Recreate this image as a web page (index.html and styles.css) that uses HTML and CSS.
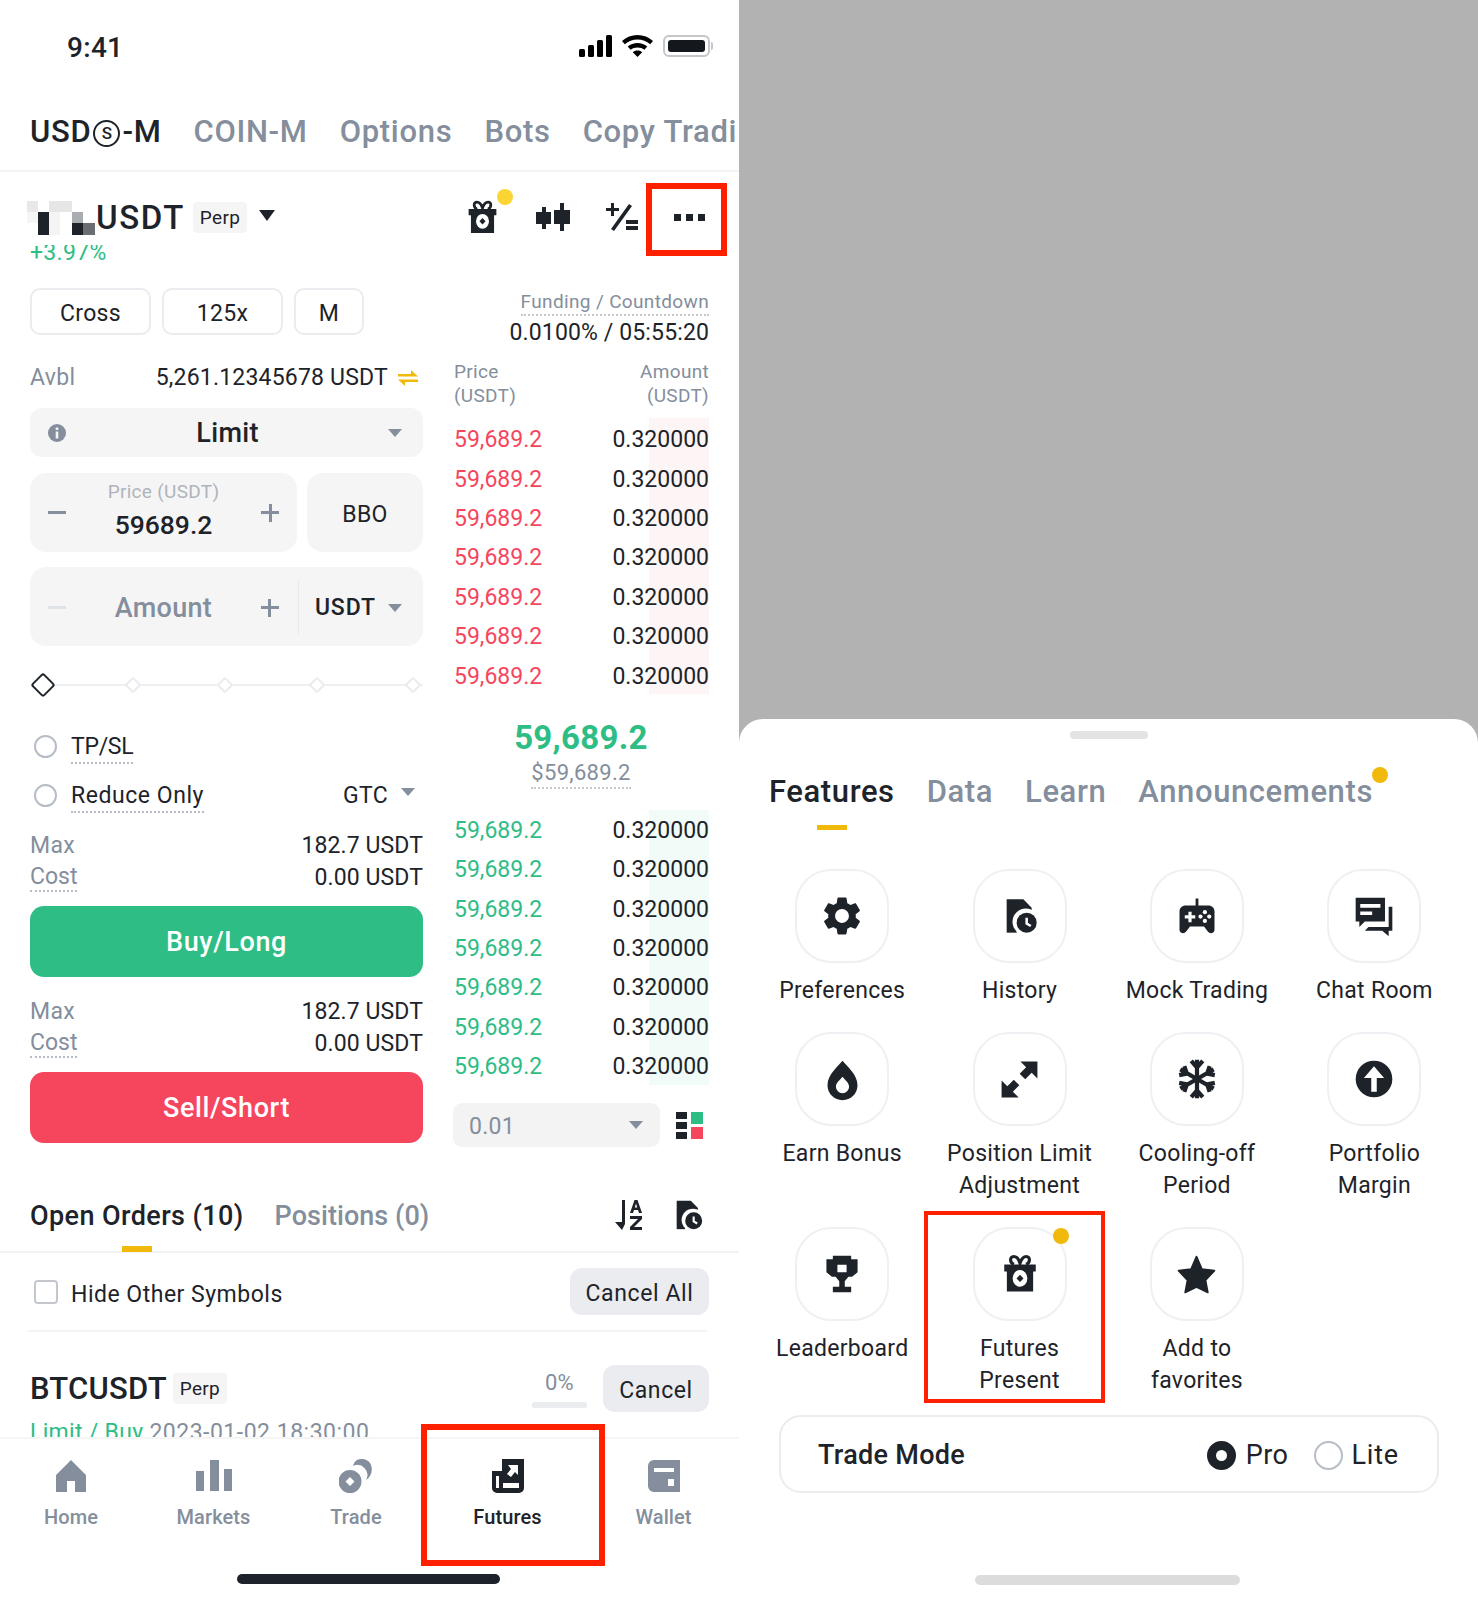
FILE: index.html
```html
<!DOCTYPE html>
<html lang="en">
<head>
    <meta charset="UTF-8">
    <title>Futures</title>
    <link rel="stylesheet" href="styles.css">
</head>
<body>
    <svg class="defs" width="0" height="0">
        <defs>
            <symbol id="i-gift" viewBox="0 0 24 24">
                <path d="M8.500 6.600C6 5.500 6 2 8.400 2c1.600 0 3 2 3.600 3.800C12.600 4 14 2 15.600 2 18 2 18 5.500 15.500 6.600" fill="none" stroke="currentColor" stroke-width="1.800"/>
                <path d="M3 6.500h18v4h-1.500V22h-15V10.500H3z" fill="currentColor"/>
                <ellipse cx="12" cy="14.500" rx="4.200" ry="4.800" fill="#fff"/>
                <path d="M12 12.400l2 2.100-2 2.100-2-2.100z" fill="currentColor"/>
            </symbol>
            <symbol id="i-hist" viewBox="0 0 24 24">
                <path d="M4 2h10l5 5v5H4z" fill="currentColor"/>
                <path d="M4 12h6v10H4z" fill="currentColor"/>
                <circle cx="15.500" cy="15.500" r="8" fill="#fff"/>
                <circle cx="16" cy="16" r="6" fill="currentColor"/>
                <path d="M16 13v3.500l2.500 1.500" fill="none" stroke="#fff" stroke-width="1.500"/>
            </symbol>
            <symbol id="i-gear" viewBox="0 0 24 24">
                <path fill="currentColor" d="M19.140 12.940c.04-.3.06-.61.06-.94 0-.32-.02-.64-.07-.94l2.030-1.580c.18-.14.23-.41.12-.61l-1.920-3.320c-.12-.22-.37-.29-.59-.22l-2.390.96c-.5-.38-1.030-.7-1.620-.94l-.36-2.540c-.04-.24-.24-.41-.48-.41h-3.840c-.24 0-.43.17-.47.41l-.36 2.540c-.59.24-1.130.57-1.620.94l-2.390-.96c-.22-.08-.47 0-.59.22L2.740 8.870c-.12.21-.08.47.12.61l2.030 1.580c-.05.3-.09.63-.09.94s.02.64.07.94l-2.030 1.580c-.18.14-.23.41-.12.61l1.920 3.320c.12.22.37.29.59.22l2.390-.96c.5.38 1.030.7 1.620.94l.36 2.540c.05.24.24.41.48.41h3.840c.24 0 .44-.17.47-.41l.36-2.540c.59-.24 1.130-.56 1.620-.94l2.390.96c.22.08.47 0 .59-.22l1.920-3.320c.12-.22.07-.47-.12-.61l-2.010-1.580zM12 15.600c-1.980 0-3.600-1.620-3.600-3.600s1.620-3.600 3.600-3.600 3.600 1.620 3.600 3.600-1.620 3.600-3.600 3.600z"/>
            </symbol>
            <symbol id="i-pad" viewBox="0 0 24 24">
                <path d="M11.200 2h1.600v4h5.700C20.500 6 22 7.400 22 9.500V20c0 1.700-2.500 2.500-3.700 1l-2.300-3H8l-2.300 3c-1.200 1.500-3.700.7-3.700-1V9.500C2 7.400 3.500 6 5.500 6h5.700z" fill="currentColor"/>
                <path d="M5 12.500h6M8 9.500v6" stroke="#fff" stroke-width="1.800"/>
                <circle cx="16.500" cy="9.800" r="1.200" fill="#fff"/><circle cx="16.500" cy="14.800" r="1.200" fill="#fff"/>
                <circle cx="14" cy="12.300" r="1.200" fill="#fff"/><circle cx="19" cy="12.300" r="1.200" fill="#fff"/>
            </symbol>
            <symbol id="i-chat" viewBox="0 0 24 24">
                <path d="M2 2h16v13H7l-3 3v-3H2z" fill="currentColor"/>
                <path d="M4.500 5.500h11v2h-11zM4.500 9.500h6.500v2h-6.500z" fill="#fff"/>
                <path d="M20 7h2v13h-2v3l-3.500-3H7l2-2h11z" fill="currentColor"/>
            </symbol>
            <symbol id="i-drop" viewBox="0 0 24 24">
                <path fill-rule="evenodd" fill="currentColor" d="M12 2c2.500 3 8 7.500 8 13a8 8 0 0 1-16 0C4 9.500 9.500 5 12 2zm0 8.500c-1.500 1.800-3.500 3.300-3.500 5.300a3.500 3.500 0 0 0 7 0c0-2-2-3.500-3.500-5.300z"/>
            </symbol>
            <symbol id="i-expand" viewBox="0 0 24 24">
                <path fill="currentColor" d="M12.500 2H22v9.500l-3.200-3.200-3.600 3.600-3.100-3.100 3.600-3.600zM2 22v-9.500l3.200 3.200 3.600-3.600 3.100 3.100-3.600 3.600 3.200 3.200z"/>
            </symbol>
            <symbol id="i-snow" viewBox="0 0 24 24">
                <g fill="none" stroke="currentColor" stroke-width="2.200">
                    <path d="M12 12V2M9 2.500l3 3.500 3-3.500"/>
                    <path d="M12 12v10M9 21.500l3-3.500 3 3.500"/>
                    <path d="M12 12L3.300 7M2.700 10l4-.8L5.400 5.300"/>
                    <path d="M12 12l8.700-5M21.300 10l-4-.8 1.300-3.900"/>
                    <path d="M12 12l-8.700 5M2.700 14l4 .8-1.300 3.900"/>
                    <path d="M12 12l8.700 5M21.300 14l-4 .8 1.300 3.900"/>
                </g>
            </symbol>
            <symbol id="i-up" viewBox="0 0 24 24">
                <circle cx="12" cy="12" r="10" fill="currentColor"/>
                <path d="M12 5l5.500 6.500H13.500V19h-3v-7.500H6.500z" fill="#fff"/>
            </symbol>
            <symbol id="i-cup" viewBox="0 0 24 24">
                <path fill-rule="evenodd" fill="currentColor" d="M7 2h10v2h3.500v7l-3 2.500H15.500L13.500 16v3H17v3H7v-3h3.500v-3l-2-2.500H6.500l-3-2.500V4H7zm2.500 5v4h5V7z"/>
            </symbol>
            <symbol id="i-star" viewBox="0 0 24 24">
                <path fill="currentColor" d="M12 2l3 7 7 .9-5 5.300 1.300 6.800-6.300-3-6.300 3L7 15.200 2 9.900 9 9z" stroke="currentColor" stroke-width="1" stroke-linejoin="round"/>
            </symbol>
        </defs>
    </svg>

    <div class="screen">
        <!-- left phone -->
        <div class="phone">
            <div class="status">
                <span class="clock">9:41</span>
                <div class="status-icons">
                    <svg width="33" height="22" viewBox="0 0 33 22"><rect x="0" y="14" width="6" height="8" rx="1.500"/><rect x="9" y="10" width="6" height="12" rx="1.500"/><rect x="18" y="5" width="6" height="17" rx="1.500"/><rect x="27" y="0" width="6" height="22" rx="1.500"/></svg>
                    <svg width="31" height="22" viewBox="0 0 31 22"><path d="M15.500 0C9.500 0 4.300 2.300 0 6l2.800 3.300C6.300 6.300 10.700 4.500 15.500 4.500s9.200 1.800 12.700 4.800L31 6C26.700 2.300 21.500 0 15.500 0z"/><path d="M15.500 8c-3.700 0-7 1.300-9.800 3.500l2.900 3.300c2-1.500 4.300-2.300 6.900-2.300s4.900.8 6.900 2.300l2.900-3.300C22.500 9.300 19.200 8 15.500 8z"/><path d="M15.500 15.500c-1.900 0-3.500.6-4.700 1.700l4.700 4.800 4.700-4.800c-1.200-1.100-2.800-1.700-4.700-1.700z"/></svg>
                    <div class="battery"><span></span></div>
                </div>
            </div>

            <div class="top-tabs">
                <div class="top-tabs-in">
                    <span class="on">USD<i class="coin">S</i>-M</span>
                    <span>COIN-M</span>
                    <span>Options</span>
                    <span>Bots</span>
                    <span>Copy Trading</span>
                </div>
            </div>

            <div class="symbol-row">
                <svg class="pixels" width="68" height="34" viewBox="0 0 68 34">
                    <rect x="0" y="0" width="11" height="11" fill="#e8e8e8"/><rect x="0" y="11" width="11" height="11" fill="#f5f5f5"/>
                    <rect x="22" y="0" width="23" height="11" fill="#e6e6e6"/><rect x="22" y="11" width="11" height="23" fill="#f4f4f4"/>
                    <rect x="11" y="11" width="11" height="23" fill="#1e2329"/>
                    <rect x="45" y="11" width="11" height="11" fill="#a9acb0"/><rect x="45" y="22" width="11" height="12" fill="#1e2329"/>
                    <rect x="56" y="22" width="12" height="12" fill="#6a6e73"/>
                </svg>
                <span class="sym">USDT</span>
                <span class="perp">Perp</span>
                <span class="caret caret-dark"></span>
                <div class="sym-icons">
                    <div class="gift-wrap">
                        <svg class="ic" width="37" height="37"><use href="#i-gift"/></svg>
                        <span class="dot dot-light"></span>
                    </div>
                    <svg class="ic" width="34" height="28" viewBox="0 0 34 28"><path d="M6 4h4v5h5v12h-5v5H6v-5H0V9h6zM24 0h4v7h6v14h-6v7h-4v-7h-6V7h6z" fill="currentColor"/></svg>
                    <svg class="ic" width="32" height="28" viewBox="0 0 32 28"><path d="M0 5h5V0h3v5h5v3H8v5H5V8H0zM23 1l3 2L8 28l-3-2zM20 17h12v4H20zM20 23h12v4H20z" fill="currentColor"/></svg>
                    <div class="more"><i></i><i></i><i></i></div>
                </div>
            </div>
            <div class="change"><span>+3.97%</span></div>

            <div class="trade">
                <div class="form">
                    <div class="lev-row">
                        <span class="lev w-wide">Cross</span>
                        <span class="lev w-wide">125x</span>
                        <span class="lev w-small">M</span>
                    </div>
                    <div class="avbl">
                        <span class="muted">Avbl</span>
                        <span class="avbl-val">5,261.12345678 USDT
                            <svg class="swap" width="20" height="16" viewBox="0 0 20 16"><path d="M0 4h13V0l7 6.500H0zM20 9.500H0l7 6.500v-4h13z" fill="#f0b90b"/></svg>
                        </span>
                    </div>
                    <div class="box limit">
                        <svg width="20" height="20" viewBox="0 0 20 20"><circle cx="10" cy="10" r="9" fill="#848e9c"/><rect x="8.700" y="8.500" width="2.600" height="7" fill="#f5f5f5"/><rect x="8.700" y="4.500" width="2.600" height="2.500" fill="#f5f5f5"/></svg>
                        <span class="limit-txt">Limit</span>
                        <span class="caret"></span>
                    </div>
                    <div class="price-row">
                        <div class="box stepper">
                            <span class="minus"></span>
                            <div class="step-mid">
                                <span class="step-label">Price (USDT)</span>
                                <span class="step-val">59689.2</span>
                            </div>
                            <span class="plus"></span>
                        </div>
                        <div class="box bbo">BBO</div>
                    </div>
                    <div class="box amount">
                        <span class="minus minus-off"></span>
                        <span class="amount-txt">Amount</span>
                        <span class="plus"></span>
                        <span class="sep"></span>
                        <span class="unit">USDT</span>
                        <span class="caret"></span>
                    </div>
                    <div class="slider">
                        <i class="knob"></i><i class="tick tick-first"></i><i class="tick"></i><i class="tick"></i><i class="tick tick-last"></i>
                    </div>
                    <div class="opt opt-first">
                        <span class="radio"></span><span class="dotted">TP/SL</span>
                    </div>
                    <div class="opt">
                        <span class="radio"></span><span class="dotted">Reduce Only</span>
                        <span class="gtc">GTC</span><span class="caret"></span>
                    </div>
                    <div class="kv"><span class="muted">Max</span><span class="num">182.7 USDT</span></div>
                    <div class="kv"><span class="muted dotted-soft">Cost</span><span class="num">0.00 USDT</span></div>
                    <div class="action buy">Buy/Long</div>
                    <div class="kv kv-top"><span class="muted">Max</span><span class="num">182.7 USDT</span></div>
                    <div class="kv"><span class="muted dotted-soft">Cost</span><span class="num">0.00 USDT</span></div>
                    <div class="action sell">Sell/Short</div>
                </div>

                <div class="book">
                    <div class="funding">
                        <span class="fund-label">Funding / Countdown</span>
                        <span class="fund-val">0.0100% / 05:55:20</span>
                    </div>
                    <div class="book-head">
                        <span>Price<br>(USDT)</span>
                        <span class="right">Amount<br>(USDT)</span>
                    </div>
                    <div class="rows rows-ask">
                        <div class="row"><span>59,689.2</span><span>0.320000</span></div>
                        <div class="row"><span>59,689.2</span><span>0.320000</span></div>
                        <div class="row"><span>59,689.2</span><span>0.320000</span></div>
                        <div class="row"><span>59,689.2</span><span>0.320000</span></div>
                        <div class="row"><span>59,689.2</span><span>0.320000</span></div>
                        <div class="row"><span>59,689.2</span><span>0.320000</span></div>
                        <div class="row"><span>59,689.2</span><span>0.320000</span></div>
                    </div>
                    <div class="mid">
                        <span class="mid-price">59,689.2</span>
                        <span class="mid-usd">$59,689.2</span>
                    </div>
                    <div class="rows rows-bid">
                        <div class="row"><span>59,689.2</span><span>0.320000</span></div>
                        <div class="row"><span>59,689.2</span><span>0.320000</span></div>
                        <div class="row"><span>59,689.2</span><span>0.320000</span></div>
                        <div class="row"><span>59,689.2</span><span>0.320000</span></div>
                        <div class="row"><span>59,689.2</span><span>0.320000</span></div>
                        <div class="row"><span>59,689.2</span><span>0.320000</span></div>
                        <div class="row"><span>59,689.2</span><span>0.320000</span></div>
                    </div>
                    <div class="book-foot">
                        <div class="step-select"><span>0.01</span><span class="caret"></span></div>
                        <svg width="27" height="27" viewBox="0 0 27 27"><rect x="0" y="0" width="11" height="7" fill="#1e2329"/><rect x="0" y="10" width="11" height="7" fill="#1e2329"/><rect x="0" y="20" width="11" height="7" fill="#1e2329"/><rect x="15" y="0" width="12" height="12" fill="#2ebd85"/><rect x="15" y="15" width="12" height="12" fill="#f6465d"/></svg>
                    </div>
                </div>
            </div>

            <div class="order-tabs">
                <span class="on">Open Orders (10)</span>
                <span>Positions (0)</span>
                <div class="order-icons">
                    <svg class="ic" width="28" height="30" viewBox="0 0 28 30"><path d="M7 0h3v24l-3 6-7-8h7z" fill="currentColor"/><path d="M15 13l4.500-13h3L27 13h-3l-1-3h-4l-1 3zM19.800 7.500h2.400L21 3.500zM15 16h12v3l-8 8h8v3H15v-3l8-8h-8z" fill="currentColor"/></svg>
                    <svg class="ic" width="34" height="34"><use href="#i-hist"/></svg>
                </div>
            </div>
            <div class="hide-row">
                <span class="check"></span>
                <span class="hide-txt">Hide Other Symbols</span>
                <span class="btn-grey cancel-all">Cancel All</span>
            </div>
            <div class="order">
                <div class="order-head">
                    <span class="order-sym">BTCUSDT</span>
                    <span class="perp">Perp</span>
                    <div class="fill">
                        <span>0%</span>
                        <i></i>
                    </div>
                    <span class="btn-grey cancel">Cancel</span>
                </div>
                <div class="order-sub"><span class="green">Limit / Buy</span> <span class="muted order-time">2023-01-02 18:30:00</span></div>
            </div>

            <div class="nav">
                <div class="nav-item">
                    <svg width="34" height="32" viewBox="0 0 34 32"><path d="M17 0l15 15v17H21V21h-8v11H2V15z" fill="currentColor"/></svg>
                    <span>Home</span>
                </div>
                <div class="nav-item">
                    <svg width="36" height="32" viewBox="0 0 36 32"><rect x="0" y="11" width="8" height="20"/><rect x="14" y="0" width="9" height="31"/><rect x="28" y="9" width="8" height="22"/></svg>
                    <span>Markets</span>
                </div>
                <div class="nav-item">
                    <svg width="34" height="34" viewBox="0 0 34 34"><path d="M14 7a10 10 0 0 1 13 14c5-3 7-9 5-15-2-6-10-7-14-5-2 1-3 3-4 6z"/><path fill-rule="evenodd" d="M11 11a11 11 0 1 1 0 23 11 11 0 0 1 0-23zm0 7l-4.500 4.500L11 27l4.500-4.500z"/></svg>
                    <span>Trade</span>
                </div>
                <div class="nav-item nav-on">
                    <svg width="32" height="34" viewBox="0 0 32 34"><path d="M10 0h22v29a5 5 0 0 1-5 5H5a5 5 0 0 1-5-5V12h10z" fill="currentColor"/><path d="M4 17h3v12H4zM11 24h16v5H11z" fill="#fff"/><path d="M16 6h10v10l-3-3-4 5-4-3 4-5z" fill="#fff"/></svg>
                    <span>Futures</span>
                </div>
                <div class="nav-item">
                    <svg width="32" height="32" viewBox="0 0 32 32"><path fill-rule="evenodd" d="M6 0h26v32H6a6 6 0 0 1-6-6V6a6 6 0 0 1 6-6zm0 8v4h20V8zm14 11v7h6v-7z"/></svg>
                    <span>Wallet</span>
                </div>
            </div>
            <div class="home-bar"></div>

            <div class="mark mark-more"></div>
            <div class="mark mark-futures"></div>
        </div>

        <!-- right phone with sheet -->
        <div class="phone phone-dim">
            <div class="sheet">
                <div class="handle"></div>
                <div class="sheet-tabs">
                    <span class="on">Features</span>
                    <span>Data</span>
                    <span>Learn</span>
                    <span class="ann">Announcements<i class="dot dot-gold"></i></span>
                </div>
                <div class="features">
                    <div class="feat"><div class="tile"><svg class="ic" width="46" height="46"><use href="#i-gear"/></svg></div><span>Preferences</span></div>
                    <div class="feat"><div class="tile"><svg class="ic" width="40" height="40"><use href="#i-hist"/></svg></div><span>History</span></div>
                    <div class="feat"><div class="tile"><svg class="ic" width="42" height="42"><use href="#i-pad"/></svg></div><span>Mock Trading</span></div>
                    <div class="feat"><div class="tile"><svg class="ic" width="44" height="44"><use href="#i-chat"/></svg></div><span>Chat Room</span></div>
                    <div class="feat"><div class="tile"><svg class="ic" width="45" height="45"><use href="#i-drop"/></svg></div><span>Earn Bonus</span></div>
                    <div class="feat"><div class="tile"><svg class="ic" width="43" height="43"><use href="#i-expand"/></svg></div><span>Position Limit Adjustment</span></div>
                    <div class="feat"><div class="tile"><svg class="ic" width="46" height="46"><use href="#i-snow"/></svg></div><span>Cooling-off Period</span></div>
                    <div class="feat"><div class="tile"><svg class="ic" width="44" height="44"><use href="#i-up"/></svg></div><span>Portfolio Margin</span></div>
                    <div class="feat"><div class="tile"><svg class="ic" width="44" height="44"><use href="#i-cup"/></svg></div><span>Leaderboard</span></div>
                    <div class="feat feat-marked"><div class="tile"><svg class="ic" width="42" height="42"><use href="#i-gift"/></svg><i class="dot dot-gold tile-dot"></i></div><span>Futures Present</span></div>
                    <div class="feat"><div class="tile"><svg class="ic" width="43" height="43"><use href="#i-star"/></svg></div><span>Add to favorites</span></div>
                </div>
                <div class="mode">
                    <span class="mode-title">Trade Mode</span>
                    <span class="mode-radio mode-on"></span><span class="mode-opt">Pro</span>
                    <span class="mode-radio"></span><span class="mode-opt mode-lite">Lite</span>
                </div>
                <div class="home-bar home-bar-light"></div>
            </div>
        </div>
    </div>
</body>
</html>
```

FILE: styles.css
```css
* {
    box-sizing: border-box;
}
body {
    margin: 0;
    background: #fff;
    color: #1e2329;
    font-family: Roboto, "Open Sans", sans-serif;
    font-size: 23px;
    letter-spacing: 0.3px;
}
.defs {
    position: absolute;
}
.screen {
    display: flex;
    width: 1478px;
    height: 1600px;
    overflow: hidden;
}
.phone {
    position: relative;
    width: 739px;
    height: 1600px;
    overflow: hidden;
    background: #fff;
}
.phone-dim {
    display: flex;
    flex-direction: column;
    justify-content: flex-end;
    background: #b2b2b2;
}
.ic {
    color: #1e2329;
    display: block;
}
.muted {
    color: #848e9c;
}
.green {
    color: #2ebd85;
}
.num {
    letter-spacing: 0.1px;
}

/* status bar */
.status {
    display: flex;
    align-items: center;
    justify-content: space-between;
    height: 92px;
    padding: 2px 29px 0 67px;
}
.clock {
    font-size: 28px;
    font-weight: 500;
    letter-spacing: 0.3px;
}
.status-icons {
    display: flex;
    align-items: center;
    gap: 10px;
    margin-top: -2px;
}
.status-icons svg {
    fill: #000;
}
.battery {
    position: relative;
    width: 47px;
    height: 22px;
    padding: 3px;
    border: 2px solid #c4c6c9;
    border-radius: 6px;
}
.battery span {
    display: block;
    height: 100%;
    background: #14171c;
    border-radius: 3px;
}
.battery::after {
    content: "";
    position: absolute;
    right: -5px;
    top: 5px;
    width: 2px;
    height: 8px;
    background: #c4c6c9;
    border-radius: 0 2px 2px 0;
}

/* top tabs */
.top-tabs {
    height: 80px;
    padding: 21px 0 0 30px;
    border-bottom: 2px solid #f2f3f4;
}
.top-tabs-in {
    display: flex;
    gap: 32px;
    width: 706px;
    color: #848e9c;
    font-size: 31px;
    font-weight: 500;
    line-height: 38px;
    letter-spacing: 0.7px;
    white-space: nowrap;
    overflow: hidden;
}
.top-tabs .on {
    color: #1e2329;
}
.coin {
    display: inline-block;
    width: 27px;
    height: 27px;
    margin: 0 2px;
    border: 2px solid #1e2329;
    border-radius: 50%;
    font-size: 17px;
    font-style: normal;
    line-height: 23px;
    text-align: center;
    vertical-align: 3px;
    letter-spacing: 0;
}

/* symbol row */
.symbol-row {
    display: flex;
    align-items: center;
    height: 70px;
    padding: 20px 0 0 27px;
}
.pixels {
    margin-top: 2px;
}
.sym {
    margin-left: 1px;
    font-size: 33px;
    font-weight: 500;
    letter-spacing: 1.6px;
}
.perp {
    display: inline-block;
    margin-left: 8px;
    padding: 0 7px;
    background: #f5f5f5;
    border-radius: 4px;
    font-size: 19px;
    line-height: 31px;
}
.caret {
    display: inline-block;
    width: 0;
    height: 0;
    border-left: 7px solid transparent;
    border-right: 7px solid transparent;
    border-top: 8px solid #848e9c;
}
.caret-dark {
    margin-left: 12px;
    margin-bottom: 3px;
    border-left-width: 8px;
    border-right-width: 8px;
    border-top: 11px solid #1e2329;
}
.sym-icons {
    display: flex;
    align-items: center;
    margin-left: auto;
    padding-right: 34px;
    gap: 36px;
}
.gift-wrap {
    position: relative;
    margin-right: -1px;
}
.dot {
    display: block;
    width: 16px;
    height: 16px;
    border-radius: 50%;
}
.dot-light {
    position: absolute;
    top: -10px;
    right: -12px;
    background: #fcd535;
}
.dot-gold {
    background: #f0b90b;
}
.more {
    display: flex;
    gap: 5px;
}
.more i {
    width: 7px;
    height: 7px;
    background: #1e2329;
}
.change {
    height: 18px;
    margin-top: 3px;
    padding-left: 30px;
    overflow: hidden;
    color: #2ebd85;
    font-size: 23px;
    line-height: 26px;
}
.change span {
    display: block;
    margin-top: -5px;
}

/* form and order book */
.trade {
    display: flex;
    gap: 31px;
    height: 859px;
    margin-top: 25px;
    padding: 0 30px;
}
.form {
    width: 393px;
}
.lev-row {
    display: flex;
    gap: 11px;
}
.lev {
    display: flex;
    align-items: center;
    justify-content: center;
    height: 47px;
    padding-top: 3px;
    border: 2px solid #eaecef;
    border-radius: 10px;
}
.w-wide {
    width: 121px;
}
.w-small {
    width: 70px;
}
.avbl {
    display: flex;
    justify-content: space-between;
    align-items: center;
    height: 40px;
    margin-top: 21px;
    margin-right: 5px;
    padding-top: 3px;
}
.avbl-val {
    display: flex;
    align-items: center;
    gap: 10px;
    letter-spacing: 0.2px;
}
.box {
    display: flex;
    align-items: center;
    background: #f5f5f5;
}
.limit {
    justify-content: space-between;
    height: 49px;
    margin-top: 12px;
    padding: 0 21px 0 17px;
    border-radius: 12px;
}
.limit-txt {
    font-size: 27px;
    font-weight: 500;
}
.price-row {
    display: flex;
    gap: 10px;
    margin-top: 16px;
}
.stepper {
    width: 267px;
    height: 79px;
    padding: 0 18px;
    border-radius: 16px;
}
.minus {
    width: 18px;
    height: 3px;
    background: #848e9c;
    flex: none;
}
.minus-off {
    background: #dfe2e6;
}
.plus {
    position: relative;
    width: 18px;
    height: 18px;
    flex: none;
    background:
        linear-gradient(#848e9c, #848e9c) center / 18px 3px no-repeat,
        linear-gradient(#848e9c, #848e9c) center / 3px 18px no-repeat;
}
.step-mid {
    flex: 1;
    display: flex;
    flex-direction: column;
    align-items: center;
    margin-top: -5px;
}
.step-label {
    color: #aeb4bc;
    font-size: 19px;
    line-height: 24px;
}
.step-val {
    margin-top: 5px;
    font-size: 26.500px;
    font-weight: 500;
    letter-spacing: 0;
    line-height: 32px;
}
.bbo {
    width: 116px;
    height: 79px;
    padding-top: 3px;
    justify-content: center;
    border-radius: 16px;
}
.amount {
    height: 79px;
    margin-top: 15px;
    padding: 2px 21px 0 18px;
    border-radius: 16px;
}
.amount-txt {
    flex: 1;
    color: #848e9c;
    font-size: 27px;
    font-weight: 500;
    text-align: center;
}
.amount > .plus {
    margin-right: 19px;
}
.sep {
    width: 1px;
    height: 53px;
    background: #e6e8ea;
    margin-right: 16px;
}
.unit {
    margin-right: 12px;
    font-weight: 500;
    letter-spacing: 0.9px;
}
.slider {
    display: flex;
    align-items: center;
    gap: 80px;
    height: 24px;
    margin: 27px 0 0 4px;
    background: linear-gradient(#eef0f2, #eef0f2) center / 100% 2px no-repeat;
}
.knob,
.tick {
    display: block;
    flex: none;
    background: #fff;
    transform: rotate(45deg);
}
.knob {
    width: 18px;
    height: 18px;
    border: 2px solid #1e2329;
    border-radius: 3px;
}
.tick {
    width: 12px;
    height: 12px;
    border: 2px solid #e9ebee;
    border-radius: 2px;
}
.tick-first {
    margin-left: -5px;
}
.tick-last {
    margin-left: 4px;
}
.opt {
    display: flex;
    align-items: center;
    height: 32px;
    margin-top: 17px;
}
.opt-first {
    margin-top: 33px;
}
.opt-first .dotted {
    letter-spacing: -0.3px;
}
.radio {
    width: 23px;
    height: 23px;
    margin: 0 14px 0 4px;
    border: 2px solid #b7bdc6;
    border-radius: 50%;
    flex: none;
}
.dotted {
    padding-top: 4px;
    border-bottom: 2px dotted #b7bdc6;
    line-height: 30px;
    letter-spacing: 0.55px;
}
.gtc {
    margin-left: auto;
    margin-right: 13px;
}
.opt .caret {
    margin-right: 8px;
    margin-bottom: 6px;
}
.kv {
    display: flex;
    justify-content: space-between;
    align-items: center;
    height: 32px;
}
.opt + .kv {
    margin-top: 18px;
}
.dotted-soft {
    border-bottom: 2px dotted #b7bdc6;
    line-height: 27px;
    letter-spacing: 0;
}
.kv-top {
    margin-top: 18px;
}
.action {
    display: flex;
    align-items: center;
    justify-content: center;
    height: 71px;
    margin-top: 13px;
    border-radius: 14px;
    color: #fff;
    font-size: 27px;
    font-weight: 500;
    letter-spacing: 0.6px;
}
.buy {
    background: #2ebd85;
}
.sell {
    background: #f6465d;
}
.book {
    width: 255px;
}
.funding {
    display: flex;
    flex-direction: column;
    align-items: flex-end;
    height: 72px;
    padding-top: 1px;
}
.fund-label {
    color: #848e9c;
    font-size: 19px;
    line-height: 25px;
    letter-spacing: 0.35px;
    border-bottom: 2px dotted #c4c8ce;
}
.fund-val {
    margin-top: 2px;
    line-height: 30px;
    letter-spacing: 0.13px;
}
.book-head {
    display: flex;
    justify-content: space-between;
    height: 58px;
    color: #848e9c;
    font-size: 19px;
    line-height: 24px;
}
.right {
    text-align: right;
}
.rows {
    background-repeat: no-repeat;
    background-position: right top;
    background-size: 60px 100%;
    letter-spacing: 0;
}
.rows-ask {
    background-image: linear-gradient(#fdf5f5, #fdf5f5);
}
.rows-bid {
    background-image: linear-gradient(#f1fbf7, #f1fbf7);
}
.row {
    display: flex;
    justify-content: space-between;
    align-items: center;
    height: 39.4px;
}
.rows-ask .row {
    padding-top: 4px;
}
.rows-bid .row {
    padding-top: 2px;
}
.rows-ask .row span:first-child {
    color: #f6465d;
}
.rows-bid .row span:first-child {
    color: #2ebd85;
}
.mid {
    display: flex;
    flex-direction: column;
    align-items: center;
    height: 116px;
    padding-top: 24px;
    padding-right: 1px;
}
.mid-price {
    color: #2ebd85;
    font-size: 33px;
    font-weight: 700;
    line-height: 40px;
}
.mid-usd {
    margin-top: 1px;
    color: #848e9c;
    font-size: 22px;
    line-height: 28px;
    border-bottom: 2px dotted #c4c8ce;
}
.book-foot {
    display: flex;
    justify-content: space-between;
    align-items: center;
    margin-top: 18px;
    padding-right: 6px;
}
.step-select {
    display: flex;
    justify-content: space-between;
    align-items: center;
    width: 207px;
    height: 44px;
    padding: 0 17px 0 16px;
    margin-left: -1px;
    background: #f3f3f3;
    border-radius: 9px;
    color: #848e9c;
}
.step-select span:first-child {
    padding-top: 3px;
}

/* orders */
.order-tabs {
    display: flex;
    align-items: center;
    gap: 31px;
    height: 106px;
    padding: 33px 34px 0 30px;
    border-bottom: 2px solid #f2f3f4;
    color: #848e9c;
    font-size: 27px;
    font-weight: 500;
    letter-spacing: 0.05px;
    position: relative;
}
.order-tabs .on {
    color: #1e2329;
    letter-spacing: 0.4px;
}
.order-tabs .on::after {
    content: "";
    position: absolute;
    left: 122px;
    bottom: -1px;
    width: 30px;
    height: 6px;
    background: #f0b90b;
}
.order-icons {
    display: flex;
    align-items: center;
    gap: 28px;
    margin-left: auto;
    margin-top: -2px;
}
.hide-row {
    display: flex;
    align-items: center;
    height: 79px;
    margin: 0 32px 0 28px;
    border-bottom: 2px solid #f2f3f4;
}
.hide-txt {
    padding-top: 5px;
    letter-spacing: 0.5px;
}
.check {
    width: 24px;
    height: 24px;
    margin: 0 13px 0 6px;
    border: 2px solid #c4c8ce;
    border-radius: 4px;
}
.btn-grey {
    display: flex;
    align-items: center;
    justify-content: center;
    height: 47px;
    padding-top: 4px;
    background: #eaecef;
    border-radius: 12px;
    letter-spacing: 0.6px;
}
.cancel-all {
    width: 139px;
    margin-left: auto;
    margin-right: -2px;
}
.order {
    height: 105px;
    padding: 33px 30px 0;
    overflow: hidden;
}
.order-head {
    display: flex;
    align-items: center;
}
.order-sym {
    font-size: 31px;
    font-weight: 500;
    letter-spacing: 0.2px;
}
.order-head .perp {
    margin-left: 6px;
    margin-top: -1px;
}
.fill {
    display: flex;
    flex-direction: column;
    align-items: center;
    width: 55px;
    margin-left: auto;
    margin-right: 16px;
    color: #848e9c;
    font-size: 22px;
}
.fill i {
    display: block;
    width: 55px;
    height: 6px;
    margin-top: 7px;
    background: #eaecef;
    border-radius: 2px;
}
.cancel {
    width: 106px;
}
.order-sub {
    margin-top: 7px;
    line-height: 28px;
    white-space: nowrap;
}
.order-time {
    letter-spacing: 0.5px;
}

/* bottom nav */
.nav {
    display: grid;
    grid-template-columns: 142px 143px 142px 161px 151px;
    height: 112px;
    padding-top: 20px;
    border-top: 2px solid #f5f5f5;
}
.nav-item {
    display: flex;
    flex-direction: column;
    align-items: center;
    color: #848e9c;
    fill: #848e9c;
    font-size: 20px;
    font-weight: 500;
    letter-spacing: 0.1px;
}
.nav-item svg {
    height: 34px;
}
.nav-item span {
    margin-top: 12px;
}
.nav-on {
    color: #1e2329;
}
.home-bar {
    width: 263px;
    height: 10px;
    margin: 25px 0 0 237px;
    background: #1e2329;
    border-radius: 5px;
}

/* red marks */
.mark {
    position: absolute;
    border: 6px solid #ff2000;
}
.mark-more {
    left: 646px;
    top: 183px;
    width: 81px;
    height: 73px;
}
.mark-futures {
    left: 421px;
    top: 1424px;
    width: 184px;
    height: 142px;
}

/* sheet */
.sheet {
    height: 881px;
    background: #fff;
    border-radius: 24px 24px 0 0;
    overflow: hidden;
}
.handle {
    width: 78px;
    height: 8px;
    margin: 12px auto 0;
    background: #e3e3e3;
    border-radius: 4px;
}
.sheet-tabs {
    display: flex;
    gap: 32px;
    height: 86px;
    padding: 33px 0 0 30px;
    color: #848e9c;
    font-size: 31px;
    font-weight: 500;
    line-height: 40px;
    letter-spacing: 0.6px;
}
.sheet-tabs .on {
    position: relative;
    color: #1e2329;
}
.sheet-tabs .on::after {
    content: "";
    position: absolute;
    left: 48px;
    top: 53px;
    width: 30px;
    height: 5px;
    background: #f0b90b;
}
.ann {
    position: relative;
}
.ann .dot {
    position: absolute;
    right: -15px;
    top: -5px;
}
.features {
    display: grid;
    grid-template-columns: repeat(4, 177.4px);
    row-gap: 25px;
    margin-top: 44px;
    padding-left: 14.500px;
}
.feat {
    position: relative;
    display: flex;
    flex-direction: column;
    align-items: center;
    padding: 0 8px;
    line-height: 32px;
    text-align: center;
}
.feat:nth-child(1),
.feat:nth-child(9) {
    padding: 0;
}
.tile {
    position: relative;
    display: flex;
    align-items: center;
    justify-content: center;
    flex: none;
    width: 94px;
    height: 94px;
    margin-bottom: 12px;
    border: 2px solid #eff0f3;
    border-radius: 36px;
}
.feat span {
    white-space: normal;
}
.feat:nth-child(-n+5) span,
.feat:nth-child(9) span {
    white-space: nowrap;
}
.tile-dot {
    position: absolute;
    top: -1px;
    right: -4px;
}
.feat-marked::after {
    content: "";
    position: absolute;
    left: -7px;
    right: 3px;
    top: -16px;
    bottom: -6px;
    border: 4px solid #ff2000;
}
.mode {
    display: flex;
    align-items: center;
    width: 660px;
    height: 78px;
    margin: 18px 0 0 40px;
    padding: 2px 38px 0 37px;
    border: 2px solid #eaecef;
    border-radius: 22px;
    font-size: 27px;
    letter-spacing: 0.5px;
}
.mode-title {
    margin-right: auto;
    font-weight: 500;
    letter-spacing: 0.3px;
}
.mode-radio {
    width: 29px;
    height: 29px;
    margin-right: 10px;
    border: 2px solid #b7bdc6;
    border-radius: 50%;
}
.mode-on {
    border: 9px solid #1e2329;
}
.mode-opt + .mode-radio {
    margin-left: 25px;
    margin-right: 9px;
}
.mode-lite {
    letter-spacing: 0.8px;
}
.home-bar-light {
    width: 265px;
    margin: 82px 0 0 236px;
    background: #dcdcdc;
}
```
